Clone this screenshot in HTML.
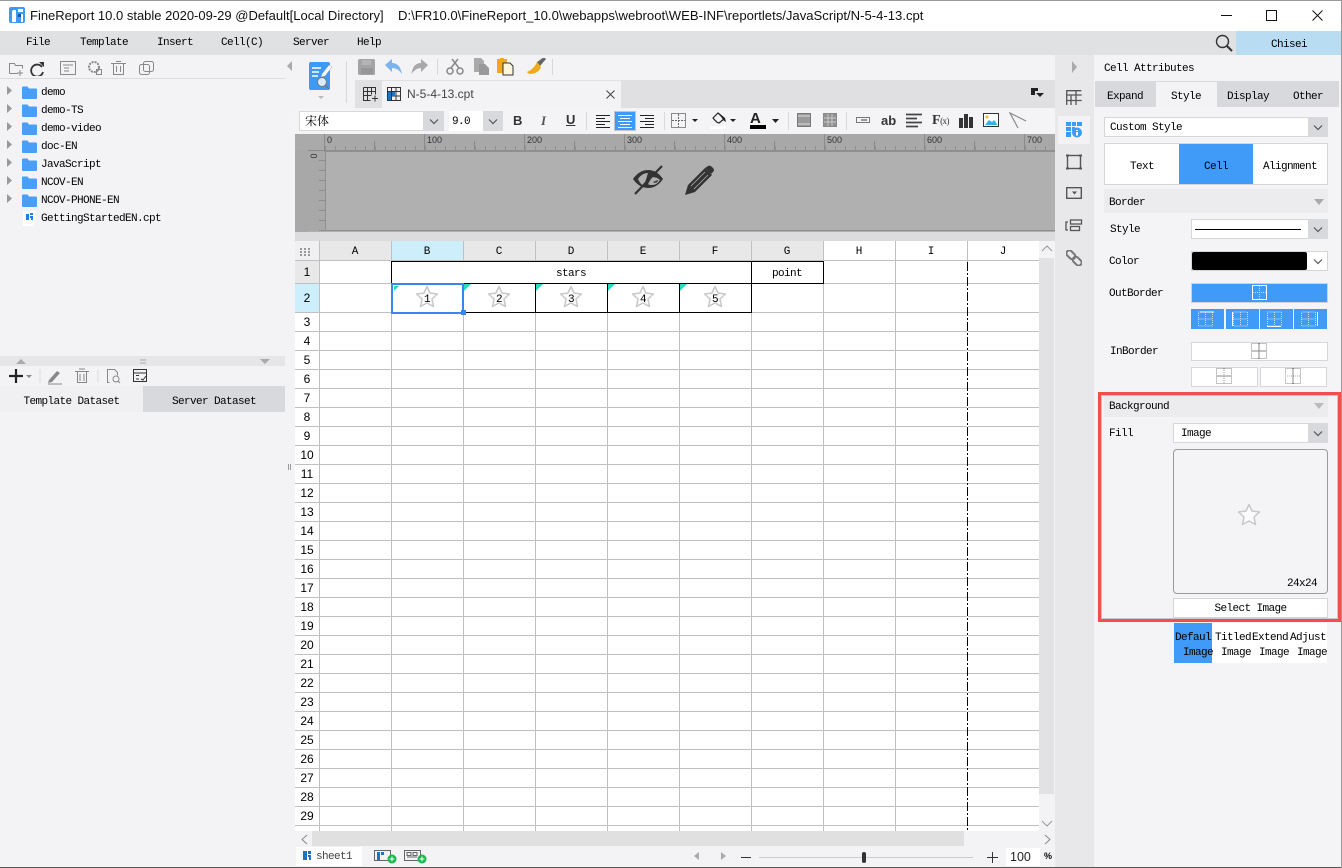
<!DOCTYPE html>
<html><head><meta charset="utf-8"><style>
html,body{margin:0;padding:0}
body{width:1342px;height:868px;position:relative;overflow:hidden;background:#f3f3f6;font-family:"Liberation Mono","Noto Sans CJK SC",monospace;color:#000}
div,span,svg{position:absolute}
.t{white-space:nowrap;font-size:11px;line-height:14px;letter-spacing:-.6px;color:#000;margin-top:1px}
.c{text-align:center}
.s{font-family:"Liberation Sans",sans-serif;letter-spacing:0;margin-top:0}
.b{background:#fff;border:1px solid #d6d6d9;box-sizing:border-box}
.dd{background:#d8d9dc}
.cl{top:245px;font-size:11px;line-height:14px;width:72px;text-align:center}
.rn{left:295px;width:24px;text-align:center;font-family:"Liberation Sans",sans-serif;font-size:12px;line-height:14px}
</style></head><body>
<svg width="0" height="0" style="position:absolute"><defs>
<symbol id="star" viewBox="0 0 24 24"><path d="M12 1.500L15 8l7.500 1-5.500 5 1.500 7.500L12 18l-6.500 3.500L7 14 1.500 9 9 8z" fill="#fbfbfb" stroke="#c8c8c8" stroke-width="1.500" stroke-linejoin="round"/></symbol>
<symbol id="folder" viewBox="0 0 15 14"><path d="M0 1.500Q0 .5 1 .5h4.500L7 2.500h7q1 0 1 1V12q0 1-1 1H1q-1 0-1-1z" fill="#4a9ef5"/></symbol>
<symbol id="chev" viewBox="0 0 20 20"><path d="M6 8.500l4 4 4-4" fill="none" stroke="#555" stroke-width="1.200"/></symbol>
<symbol id="cell" viewBox="0 0 32 20"><g fill="none" stroke="#fff" stroke-dasharray="1 1" opacity=".7"><rect x="7" y="3" width="14" height="14"/><path d="M14 3v14M7 10h14"/></g></symbol>
</defs></svg>

<!-- title bar -->
<div style="left:0;top:0;width:1342px;height:31px;background:#fff"></div>
<svg style="left:9px;top:7px" width="16" height="16" viewBox="0 0 16 16"><rect width="16" height="16" rx="2" fill="#3c9af0"/><path d="M3 15V5q0-2 2-2h2v12zM9 2h5v3H9zM9 7h5v8h-2v-5H9z" fill="#fff"/><path d="M9 7h3v3H9z" fill="#0f5aa8"/></svg>
<div class="t s" style="left:30px;top:8px;font-size:13px;line-height:16px;color:#111">FineReport 10.0 stable 2020-09-29 @Default[Local Directory]</div>
<div class="t s" style="left:398px;top:8px;font-size:13.100px;line-height:16px;color:#111">D:\FR10.0\FineReport_10.0\webapps\webroot\WEB-INF\reportlets/JavaScript/N-5-4-13.cpt</div>
<div style="left:1221px;top:15px;width:11px;height:1px;background:#111"></div>
<div style="left:1266px;top:10px;width:9px;height:9px;border:1px solid #111"></div>
<svg style="left:1312px;top:10px" width="11" height="11"><path d="M.5.5l10 10M10.500.5l-10 10" stroke="#111" fill="none"/></svg>

<!-- menu -->
<div style="left:0;top:31px;width:1342px;height:24px;background:#e0e1e3"></div>
<div class="t" style="left:26px;top:35px">File</div>
<div class="t" style="left:80px;top:35px">Template</div>
<div class="t" style="left:157px;top:35px">Insert</div>
<div class="t" style="left:221px;top:35px">Cell(C)</div>
<div class="t" style="left:293px;top:35px">Server</div>
<div class="t" style="left:357px;top:35px">Help</div>
<svg style="left:1215px;top:34px" width="18" height="18"><circle cx="7.500" cy="7.500" r="6" fill="none" stroke="#333" stroke-width="1.400"/><path d="M12 12l5 5" stroke="#333" stroke-width="2"/></svg>
<div style="left:1236px;top:31px;width:106px;height:24px;background:#b8dcf2"></div>
<div class="t c" style="left:1236px;top:37px;width:106px">Chisei</div>

<!-- left panel -->
<div style="left:0;top:78px;width:285px;height:1px;background:#dcdcde"></div>
<svg style="left:8px;top:60px" width="150" height="16" fill="none" stroke="#888"><path d="M1.500 13.500v-10h5l1 2h7v3M1.500 13.500h8M12 10v6M9 13h6"/><path d="M34 7a6 6 0 1 0 1 5" stroke="#333" stroke-width="1.800"/><path d="M31 2h5v5z" fill="#333" stroke="none"/><rect x="52.500" y="1.500" width="15" height="13"/><path d="M55 5h10M56 8h5M56 11h5"/><circle cx="86" cy="7" r="5" stroke-dasharray="2 1" stroke-width="2"/><rect x="88.500" y="9.500" width="5" height="5"/><rect x="105.500" y="3.500" width="10" height="11"/><path d="M103 3.500h15M108 1.500h5M108.500 6v6M112.500 6v6"/><rect x="131.500" y="4.500" width="10" height="10" rx="2"/><rect x="135.500" y="1.500" width="10" height="10" rx="2"/></svg>

<svg style="left:7px;top:86px" width="6" height="124" fill="#999"><path d="M0 0l5 4.500-5 4.500zM0 18l5 4.500-5 4.500zM0 36l5 4.500-5 4.500zM0 54l5 4.500-5 4.500zM0 72l5 4.500-5 4.500zM0 90l5 4.500-5 4.500zM0 108l5 4.500-5 4.500z"/></svg>
<svg style="left:22px;top:86px" width="15" height="14"><use href="#folder"/></svg>
<svg style="left:22px;top:104px" width="15" height="14"><use href="#folder"/></svg>
<svg style="left:22px;top:122px" width="15" height="14"><use href="#folder"/></svg>
<svg style="left:22px;top:140px" width="15" height="14"><use href="#folder"/></svg>
<svg style="left:22px;top:158px" width="15" height="14"><use href="#folder"/></svg>
<svg style="left:22px;top:176px" width="15" height="14"><use href="#folder"/></svg>
<svg style="left:22px;top:194px" width="15" height="14"><use href="#folder"/></svg>
<svg style="left:23px;top:211px" width="13" height="15"><path d="M0 0h12v11l-3 4H0z" fill="#fff"/><path d="M3 3h3v6H3zM7 2h3v2H7zM7 5h3v4H8V7H7z" fill="#1f7fe0"/></svg>
<div class="t" style="left:41px;top:85px">demo</div>
<div class="t" style="left:41px;top:103px">demo-TS</div>
<div class="t" style="left:41px;top:121px">demo-video</div>
<div class="t" style="left:41px;top:139px">doc-EN</div>
<div class="t" style="left:41px;top:157px">JavaScript</div>
<div class="t" style="left:41px;top:175px">NCOV-EN</div>
<div class="t" style="left:41px;top:193px">NCOV-PHONE-EN</div>
<div class="t" style="left:41px;top:211px">GettingStartedEN.cpt</div>

<div style="left:0;top:356px;width:285px;height:10px;background:#e6e6e8"></div>
<svg style="left:16px;top:358px" width="260" height="7"><path d="M0 6l5-5 5 5zM244 1h10l-5 5z" fill="#aaa"/><path d="M124 2h6M124 5h6" stroke="#aaa"/></svg>
<svg style="left:8px;top:367px" width="142" height="18"><path d="M8 2v14M1 9h14" stroke="#222" stroke-width="2.200"/><path d="M18 8h6l-3 3z" fill="#888"/><path d="M32 2v14M90 2v14" stroke="#ddd"/><path d="M41 13l8-9 3 2-8 9-4 1z" fill="#888"/><path d="M40 17h14" stroke="#888"/><g fill="none" stroke="#888"><rect x="69.500" y="4.500" width="9" height="11"/><path d="M67 4.500h14M71 2h6M72 7v7M76 7v7"/><path d="M101.500 15.500h-2v-13h7l3 3v3"/><circle cx="108" cy="12" r="3"/><path d="M110 14l2 2"/></g><g fill="none" stroke="#333"><rect x="125.500" y="2.500" width="13" height="12"/><path d="M125 6h14M128 8.500h3M128 12h3M133 12l2 1 3-4"/></g></svg>
<div style="left:0;top:386px;width:143px;height:26px;background:#f0f0f3"></div>
<div style="left:143px;top:386px;width:142px;height:26px;background:#d8d9dc"></div>
<div class="t c" style="left:0;top:394px;width:143px">Template Dataset</div>
<div class="t c" style="left:143px;top:394px;width:142px">Server Dataset</div>
<div style="left:288px;top:464px;width:1px;height:6px;background:#999"></div>
<div style="left:290px;top:464px;width:1px;height:6px;background:#999"></div>

<!-- top toolbar -->
<svg style="left:287px;top:61px" width="6" height="10"><path d="M5 0v10L0 5z" fill="#aaa"/></svg>
<svg style="left:309px;top:61px" width="24" height="41"><rect y="1" width="21" height="28" rx="2" fill="#3d9bf7"/><path d="M3 7h9M3 11h7M3 15h6" stroke="#fff" stroke-width="1.500"/><path d="M13 13l7-9 3 2-7 9-4 1z" fill="#fff" stroke="#999" stroke-width=".5"/><circle cx="13" cy="21" r="4.500" fill="#dbeafc" stroke="#777"/><path d="M16 24l4 4" stroke="#777" stroke-width="1.500"/><path d="M9 35h6l-3 3z" fill="#bbb"/></svg>
<div style="left:346px;top:61px;width:1px;height:42px;background:#d8d8da"></div>
<div style="left:437px;top:59px;width:1px;height:16px;background:#d8d8da"></div>
<div style="left:552px;top:59px;width:1px;height:16px;background:#d8d8da"></div>
<svg style="left:357px;top:58px" width="190" height="18"><path d="M1 3q0-2 2-2h14l1 1v14q0 1-1 1H3q-2 0-2-2z" fill="#a4a4a4"/><rect x="5" y="2" width="9" height="5" fill="#b4b4b4"/><rect x="4" y="10" width="12" height="6" fill="#969696"/><path d="M28 7l7-6v4q8 0 10 11-4-6-10-6v4z" fill="#7ab3ee"/><path d="M71 7l-7-6v4q-8 0-9.500 11 4-6 9.500-6v4z" fill="#a8a8a8"/><g fill="none" stroke="#888" stroke-width="1.500"><circle cx="93" cy="13" r="3"/><circle cx="103" cy="13" r="3"/><path d="M94 10l7-9M102 10l-7-9"/></g><path d="M117 0h7l3 3v3h-5v8h-5z" fill="#aaa"/><path d="M122 6h6l4 4v7h-10z" fill="#999"/><rect x="140" y="1" width="10" height="14" fill="#f2a81d"/><path d="M146 5h7l3 3v9h-10z" fill="#fdf6dd" stroke="#333"/><rect x="143" y="0" width="4" height="2" fill="#f2a81d"/><path d="M180 4l7-5 2 2-6 7z" fill="#666"/><path d="M180 4l4 5q-2 6-10 7-3 0-4-2 7-3 10-10z" fill="#f0a91f"/></svg>

<!-- tab bar -->
<div style="left:355px;top:80px;width:700px;height:28px;background:#e0e0e2"></div>
<div style="left:382px;top:81px;width:239px;height:27px;background:#f3f3f6"></div>
<svg style="left:363px;top:87px" width="16" height="15" fill="none" stroke="#333"><path d="M.5 .5h12v7M.5 .5v13h7M4.500 .5v13M8.500 .5v7M.5 4.500h12M.5 8.500h8"/><path d="M12 8.500v6M9 11.500h6"/></svg>
<svg style="left:387px;top:87px" width="14" height="14"><path d="M.5 .5h13v13H.5zM4.500 .5v13M9 .5v13M.5 4.500h13M.5 9h13" fill="none" stroke="#333"/><rect x="1" y="5" width="3" height="8" fill="#1a75c9"/><rect x="5" y="5" width="3" height="4" fill="#1a75c9"/></svg>
<div class="t s" style="left:407px;top:87px;font-size:12px;line-height:15px;color:#444">N-5-4-13.cpt</div>
<svg style="left:606px;top:90px" width="9" height="9"><path d="M.5 .5l8 8M8.500 .5l-8 8" stroke="#444"/></svg>
<svg style="left:1031px;top:88px" width="14" height="11"><path d="M0 0h7v3H4v4H0z" fill="#222"/><path d="M5 5h8l-4 4z" fill="#222"/></svg>

<!-- format toolbar -->
<div style="left:295px;top:108px;width:760px;height:26px;background:#f4f4f7"></div>
<div style="left:299px;top:111px;width:125px;height:20px;background:#fff;border:1px solid #d8d8d8;box-sizing:border-box"></div>
<div class="dd" style="left:424px;top:111px;width:20px;height:20px"></div>
<svg style="left:424px;top:111px" width="20" height="20"><use href="#chev"/></svg>
<div class="t" style="left:305px;top:113px;margin-top:0;font-family:'Noto Serif CJK SC','Noto Sans CJK SC',serif;font-size:12px;letter-spacing:0;line-height:16px">宋体</div>
<div style="left:449px;top:111px;width:34px;height:20px;background:#fff"></div>
<div class="dd" style="left:483px;top:111px;width:20px;height:20px"></div>
<svg style="left:483px;top:111px" width="20" height="20"><use href="#chev"/></svg>
<div class="t" style="left:452px;top:114px">9.0</div>
<div class="t s" style="left:513px;top:113px;font-weight:700;font-size:13px;line-height:16px;color:#333">B</div>
<div class="t s" style="left:541px;top:113px;font-style:italic;font-weight:700;font-size:13px;line-height:16px;color:#555;font-family:'Liberation Serif',serif">I</div>
<div class="t s" style="left:566px;top:112px;font-weight:700;font-size:13px;line-height:15px;color:#333;text-decoration:underline">U</div>
<div style="left:586px;top:112px;width:1px;height:18px;background:#d8d8da"></div>
<div style="left:614px;top:111px;width:22px;height:20px;background:#409bf8;box-sizing:border-box;border:1px solid #c5c5c8"></div>
<svg style="left:596px;top:115px" width="60" height="13"><path d="M0 .5h14M0 3.500h9M0 6.500h14M0 9.500h9M0 12.500h14M44 .5h14M49 3.500h9M44 6.500h14M49 9.500h9M44 12.500h14" stroke="#222"/><path d="M22 .5h14M24 3.500h10M22 6.500h14M24 9.500h10M22 12.500h14" stroke="#fff"/></svg>
<div style="left:664px;top:112px;width:1px;height:18px;background:#d8d8da"></div>
<svg style="left:671px;top:113px" width="30" height="15"><rect x=".5" y=".5" width="14" height="14" fill="none" stroke="#222" stroke-dasharray="1 1"/><path d="M7.500 1v13M1 7.500h13" stroke="#666" stroke-dasharray="2 1"/><path d="M21 6h6l-3 3z" fill="#222"/></svg>
<svg style="left:710px;top:112px" width="32" height="17"><path d="M3 6l5-5 6 6-5 4q-2 0-6-5z" fill="#f4f4f7" stroke="#222" stroke-width="1.200"/><path d="M6 3l3-3M9 1l6 5 1 4-3-2z" fill="#222"/><rect y="14" width="16" height="3" fill="#fff"/><path d="M20 7h6l-3 3z" fill="#222"/></svg>
<div class="t s" style="left:750px;top:110px;font-weight:700;font-size:15px;line-height:17px;color:#222">A</div>
<div style="left:750px;top:125px;width:16px;height:4px;background:#000"></div>
<svg style="left:772px;top:119px" width="7" height="4"><path d="M0 0h7L3.500 4z" fill="#222"/></svg>
<div style="left:788px;top:112px;width:1px;height:18px;background:#d8d8da"></div>
<div style="left:846px;top:112px;width:1px;height:18px;background:#d8d8da"></div>
<svg style="left:797px;top:113px" width="40" height="15"><rect x=".5" y=".5" width="13" height="13" fill="#9a9a9a" stroke="#777"/><path d="M1 3h12M1 11h12" stroke="#ddd"/><rect x="26.500" y=".5" width="13" height="13" fill="#8f8f8f" stroke="#888"/><path d="M27 5h12M27 9h12M31 1v12M35 1v12" stroke="#ccc"/></svg>
<svg style="left:855px;top:112px" width="175" height="17"><g fill="none" stroke="#777"><rect x="1.500" y="5.500" width="13" height="5"/><path d="M6 8h6" stroke-width="1.500"/></g><path d="M51 2.500h16M51 6.500h11M51 10.500h16M51 14.500h12" stroke="#444" stroke-width="1.800"/><rect x="104" y="6" width="4" height="10" fill="#333"/><rect x="109" y="2" width="4" height="14" fill="#333"/><rect x="114" y="5" width="4" height="11" fill="#333"/><rect x="128.500" y="1.500" width="15" height="13" fill="#fff" stroke="#333"/><path d="M130 13l4-5 3 2 2-2 3 4v1z" fill="#33b4ee"/><circle cx="132" cy="5" r="1.500" fill="#f5b53b"/><path d="M171 9L155 1l8 15" fill="none" stroke="#888" stroke-width="1.200"/></svg>
<div class="t s" style="left:881px;top:113px;font-weight:700;font-size:13px;line-height:16px;color:#333">ab</div>
<div class="t" style="left:932px;top:113px;margin-top:0;font-family:'Liberation Serif',serif;font-weight:700;font-size:14px;letter-spacing:-.5px;line-height:16px;color:#333">F<span style="position:static;font-size:9px;font-weight:400">(x)</span></div>

<!-- ruler / header area -->
<div style="left:295px;top:134px;width:760px;height:98px;background:#b0b0b0"></div>
<div style="left:295px;top:134px;width:13px;height:98px;background:#a8a8a8"></div>
<div style="left:295px;top:134px;width:760px;height:16px;background:#a8a8a8"></div>
<div style="left:308px;top:150px;width:17px;height:81px;background:#a8a8a8"></div>
<div style="left:295px;top:134px;width:30px;height:16px;background:#aaa"></div>
<div style="left:325px;top:143px;width:730px;height:7px;background:repeating-linear-gradient(90deg,#8e8e8e 0,#8e8e8e 1px,transparent 1px,transparent 10px) 0 3px no-repeat"></div>
<div style="left:324px;top:134px;width:731px;height:16px;background:repeating-linear-gradient(90deg,#8a8a8a 0,#8a8a8a 1px,transparent 1px,transparent 100px)"></div>
<div style="left:374px;top:141px;width:681px;height:9px;background:repeating-linear-gradient(90deg,#8a8a8a 0,#8a8a8a 1px,transparent 1px,transparent 100px)"></div>
<div style="left:324px;top:150px;width:731px;height:2px;background:#8f8f8f"></div>
<div style="left:325px;top:150px;width:1px;height:81px;background:#8f8f8f"></div>
<div style="left:325px;top:230px;width:730px;height:1px;background:#8f8f8f"></div>
<div style="left:308px;top:150px;width:17px;height:1px;background:#8a8a8a"></div>
<div style="left:319px;top:160px;width:6px;height:71px;background:repeating-linear-gradient(180deg,#8e8e8e 0,#8e8e8e 1px,transparent 1px,transparent 10px)"></div>
<div class="t s" style="left:327px;top:134px;font-size:9px;line-height:12px;color:#333">0</div>
<div class="t s" style="left:427px;top:134px;font-size:9px;line-height:12px;color:#333">100</div>
<div class="t s" style="left:527px;top:134px;font-size:9px;line-height:12px;color:#333">200</div>
<div class="t s" style="left:627px;top:134px;font-size:9px;line-height:12px;color:#333">300</div>
<div class="t s" style="left:727px;top:134px;font-size:9px;line-height:12px;color:#333">400</div>
<div class="t s" style="left:827px;top:134px;font-size:9px;line-height:12px;color:#333">500</div>
<div class="t s" style="left:927px;top:134px;font-size:9px;line-height:12px;color:#333">600</div>
<div class="t s" style="left:1027px;top:134px;font-size:9px;line-height:12px;color:#333">700</div>
<div class="t s" style="left:311px;top:151px;font-size:9px;line-height:10px;color:#333;transform:rotate(90deg)">0</div>
<svg style="left:632px;top:165px" width="34" height="31"><path d="M1 14q6-9 15-9 9 0 15 9-6 9-15 9Q7 23 1 14z" fill="#333"/><path d="M6 14q4-6 10-6l-4 13q-4-2-6-7z" fill="#b0b0b0"/><path d="M20 12q5 0 8 3-3 5-8 5-3 0-4-1l4-7z" fill="#b0b0b0"/><path d="M21 17a3 3 0 0 0 5-2z" fill="#333"/><path d="M3 29L30 1" stroke="#333" stroke-width="2.200"/></svg>
<svg style="left:684px;top:165px" width="31" height="31"><path d="M1 30l3-10L21 3l7 7L11 27z" fill="#333"/><path d="M7 21L21 7M10 24L24 10" stroke="#b0b0b0" stroke-width=".8"/><path d="M21 3l3-2q2-1 4 1l1 1q2 2 0 4l-2 2z" fill="#333"/></svg>
<div style="left:295px;top:232px;width:760px;height:9px;background:#dcdcde"></div>

<!-- grid -->
<div style="left:295px;top:241px;width:744px;height:590px;background:#fff"></div>
<div style="left:295px;top:241px;width:528px;height:20px;background:#e8e8e8"></div>
<div style="left:295px;top:241px;width:24px;height:20px;background:#f0f0f2"></div>
<div style="left:391px;top:241px;width:72px;height:20px;background:#cdeefb"></div>
<div style="left:295px;top:261px;width:24px;height:22px;background:#e8e8e8"></div>
<div style="left:295px;top:283px;width:24px;height:29px;background:#cdeefb"></div>
<svg style="left:300px;top:248px" width="11" height="9" fill="#999"><path d="M0 0h2v2H0zM4 0h2v2H4zM8 0h2v2H8zM0 3h2v2H0zM4 3h2v2H4zM8 3h2v2H8zM0 6h2v2H0zM4 6h2v2H4zM8 6h2v2H8z"/></svg>
<!-- horizontal lines -->
<div style="left:295px;top:260px;width:744px;height:1px;background:#c0c0c0"></div>
<div style="left:295px;top:283px;width:744px;height:1px;background:#c0c0c0"></div>
<div style="left:295px;top:312px;width:744px;height:520px;background:repeating-linear-gradient(180deg,#c0c0c0 0,#c0c0c0 1px,transparent 1px,transparent 19px)"></div>
<!-- vertical lines -->
<div style="left:319px;top:241px;width:720px;height:590px;background:repeating-linear-gradient(90deg,#c0c0c0 0,#c0c0c0 1px,transparent 1px,transparent 72px)"></div>
<div style="left:967px;top:262px;width:1px;height:569px;background:repeating-linear-gradient(180deg,#000 0,#000 9px,#fff 9px,#fff 11px,#000 11px,#000 13px,#fff 13px,#fff 15px)"></div>
<div class="cl" style="left:319px">A</div><div class="cl" style="left:391px">B</div><div class="cl" style="left:463px">C</div><div class="cl" style="left:535px">D</div><div class="cl" style="left:607px">E</div><div class="cl" style="left:679px">F</div><div class="cl" style="left:751px">G</div><div class="cl" style="left:823px">H</div><div class="cl" style="left:895px">I</div><div class="cl" style="left:967px">J</div>
<div class="rn" style="top:265px">1</div><div class="rn" style="top:291px">2</div><div class="rn" style="top:315px">3</div><div class="rn" style="top:334px">4</div><div class="rn" style="top:353px">5</div><div class="rn" style="top:372px">6</div><div class="rn" style="top:391px">7</div><div class="rn" style="top:410px">8</div><div class="rn" style="top:429px">9</div><div class="rn" style="top:448px">10</div><div class="rn" style="top:467px">11</div><div class="rn" style="top:486px">12</div><div class="rn" style="top:505px">13</div><div class="rn" style="top:524px">14</div><div class="rn" style="top:543px">15</div><div class="rn" style="top:562px">16</div><div class="rn" style="top:581px">17</div><div class="rn" style="top:600px">18</div><div class="rn" style="top:619px">19</div><div class="rn" style="top:638px">20</div><div class="rn" style="top:657px">21</div><div class="rn" style="top:676px">22</div><div class="rn" style="top:695px">23</div><div class="rn" style="top:714px">24</div><div class="rn" style="top:733px">25</div><div class="rn" style="top:752px">26</div><div class="rn" style="top:771px">27</div><div class="rn" style="top:790px">28</div><div class="rn" style="top:809px">29</div>

<!-- cell contents -->
<div style="left:391px;top:261px;width:361px;height:23px;box-sizing:border-box;border:1px solid #000;background:#fff"></div>
<div style="left:751px;top:261px;width:73px;height:23px;box-sizing:border-box;border:1px solid #000;background:#fff"></div>
<div style="left:391px;top:283px;width:361px;height:30px;box-sizing:border-box;border:1px solid #000;background:#fff"></div>
<div style="left:535px;top:283px;width:1px;height:29px;background:#000"></div>
<div style="left:607px;top:283px;width:1px;height:29px;background:#000"></div>
<div style="left:679px;top:283px;width:1px;height:29px;background:#000"></div>
<div style="left:463px;top:283px;width:1px;height:29px;background:#000"></div>
<div class="t c" style="left:391px;top:266px;width:360px">stars</div>
<div class="t c" style="left:751px;top:266px;width:72px">point</div>
<svg style="left:415px;top:285px" width="24" height="24"><use href="#star"/></svg>
<svg style="left:487px;top:285px" width="24" height="24"><use href="#star"/></svg>
<svg style="left:559px;top:285px" width="24" height="24"><use href="#star"/></svg>
<svg style="left:631px;top:285px" width="24" height="24"><use href="#star"/></svg>
<svg style="left:703px;top:285px" width="24" height="24"><use href="#star"/></svg>
<div class="t c" style="left:391px;top:292px;width:72px">1</div>
<div class="t c" style="left:463px;top:292px;width:72px">2</div>
<div class="t c" style="left:535px;top:292px;width:72px">3</div>
<div class="t c" style="left:607px;top:292px;width:72px">4</div>
<div class="t c" style="left:679px;top:292px;width:72px">5</div>
<svg style="left:392px;top:284px" width="300" height="7" fill="#27dcc0"><path d="M2 2h5l-5 5zM72 0h7l-7 7zM144 0h7l-7 7zM216 0h7l-7 7zM288 0h7l-7 7z"/></svg>
<div style="left:391px;top:283px;width:73px;height:31px;box-sizing:border-box;border:2.500px solid #3a86ee"></div>
<div style="left:461px;top:310px;width:5px;height:5px;background:#3a86ee"></div>

<!-- vertical scrollbar -->
<div style="left:1039px;top:241px;width:16px;height:590px;background:#f3f3f6"></div>
<div style="left:1039px;top:258px;width:15px;height:536px;background:#e2e2e4"></div>
<svg style="left:1041px;top:245px" width="12" height="8"><path d="M1 6l5-5 5 5" fill="none" stroke="#999"/></svg>
<svg style="left:1041px;top:820px" width="12" height="8"><path d="M1 1l5 5 5-5" fill="none" stroke="#999"/></svg>

<!-- horizontal scrollbar / footer -->
<div style="left:295px;top:831px;width:760px;height:37px;background:#f3f3f6"></div>
<div style="left:312px;top:831px;width:652px;height:15px;background:#e0e0e0"></div>
<svg style="left:301px;top:834px" width="8" height="11"><path d="M6 1L1 5.500 6 10" fill="none" stroke="#888"/></svg>
<svg style="left:1044px;top:834px" width="8" height="11"><path d="M1 1l5 4.500L1 10" fill="none" stroke="#888"/></svg>
<div style="left:296px;top:847px;width:66px;height:19px;background:#fff"></div>
<svg style="left:303px;top:851px" width="9" height="9"><path d="M0 0h4v9H0zM5 0h3v3H5zM5 4h3v5H6V6H5z" fill="#1a75c9"/></svg>
<div class="t" style="left:316px;top:849px;color:#444">sheet1</div>
<svg style="left:374px;top:849px" width="24" height="15"><rect x=".5" y="1.500" width="16" height="10" fill="none" stroke="#666"/><path d="M3 3h3v8H3zM7 3h3v3H7z" fill="#1a75c9"/><circle cx="18" cy="10" r="4.500" fill="#16b84e"/><path d="M18 7.500v5M15.500 10h5" stroke="#fff"/></svg>
<svg style="left:404px;top:849px" width="24" height="15"><rect x=".5" y="1.500" width="16" height="10" fill="none" stroke="#666"/><path d="M3 3.500h4v3H3zM9 3.500h4v3H9zM3 8h10" fill="none" stroke="#666"/><circle cx="18" cy="10" r="4.500" fill="#16b84e"/><path d="M18 7.500v5M15.500 10h5" stroke="#fff"/></svg>
<svg style="left:694px;top:852px" width="32" height="9" fill="#aaa"><path d="M5 0v8L0 4zM27 0v8l5-4z"/></svg>
<div style="left:741px;top:857px;width:10px;height:1px;background:#333"></div>
<div style="left:759px;top:857px;width:214px;height:1px;background:#ccc"></div>
<div style="left:862px;top:852px;width:4px;height:11px;background:#333;border-radius:2px"></div>
<svg style="left:987px;top:852px" width="11" height="11"><path d="M5.500 0v11M0 5.500h11" stroke="#333"/></svg>
<div style="left:1006px;top:848px;width:34px;height:18px;background:#fff"></div>
<div class="t s" style="left:1010px;top:850px;font-size:12.500px;line-height:15px;color:#222">100</div>
<div class="t s" style="left:1044px;top:850px;font-size:9px;font-weight:700;line-height:12px">%</div>

<!-- side icon strip -->
<div style="left:1055px;top:55px;width:39px;height:813px;background:#e8e8ea"></div>
<div style="left:1058px;top:116px;width:32px;height:28px;background:#f3f3f6"></div>
<svg style="left:1072px;top:61px" width="6" height="12"><path d="M0 0l5 6-5 6z" fill="#aaa"/></svg>
<svg style="left:1066px;top:90px" width="16" height="16" fill="none" stroke="#555" stroke-width="1.300"><path d="M.7 15V.7h14.600M.7 5h15M.7 10.500h15M5 5v10M10 .7V15"/></svg>
<svg style="left:1066px;top:122px" width="16" height="16" fill="#3d9bf7"><path d="M0 0h5v4H0zM6 0h4v4H6zM11 0h5v4h-5zM0 5h5v4H0zM0 10h5v5H0zM6 5h3v4H6z"/><circle cx="11" cy="10.500" r="5"/><path d="M10 8h2v1h-2zM10 10h2v3.500h-2z" fill="#fff"/></svg>
<svg style="left:1066px;top:154px" width="16" height="16" fill="none" stroke="#555"><rect x="1.500" y="1.500" width="13" height="13" stroke-width="1.400"/><path d="M0 1.500h3M13 1.500h3M0 14.500h3M13 14.500h3" stroke-width="2"/></svg>
<svg style="left:1066px;top:187px" width="16" height="13"><rect x=".7" y=".7" width="14.600" height="10.600" fill="none" stroke="#555" stroke-width="1.400"/><path d="M6 4.500h5l-2.500 3z" fill="#555"/></svg>
<svg style="left:1065px;top:219px" width="18" height="14" fill="none" stroke="#555" stroke-width="1.300"><rect x="5.500" y="1" width="11" height="4"/><rect x="5.500" y="7.500" width="9" height="4"/><path d="M3 3H1v8h2"/></svg>
<svg style="left:1066px;top:250px" width="16" height="16" fill="none" stroke="#777" stroke-width="2"><rect x="-1.500" y="5" width="10" height="6" rx="3" transform="rotate(45 8 8)"/><rect x="7.500" y="5" width="10" height="6" rx="3" transform="rotate(45 8 8)"/></svg>

<!-- attribute panel -->
<div style="left:1094px;top:55px;width:248px;height:813px;background:#f4f4f7"></div>
<div class="t" style="left:1104px;top:61px">Cell Attributes</div>
<div style="left:1095px;top:81px;width:244px;height:26px;background:#d8d9dc"></div>
<div style="left:1156px;top:82px;width:61px;height:25px;background:#f3f3f6"></div>
<div class="t" style="left:1107px;top:89px">Expand</div>
<div class="t" style="left:1171px;top:89px">Style</div>
<div class="t" style="left:1227px;top:89px">Display</div>
<div class="t" style="left:1293px;top:89px">Other</div>

<div class="b" style="left:1104px;top:117px;width:224px;height:20px"></div>
<div class="dd" style="left:1308px;top:117px;width:20px;height:20px"></div>
<svg style="left:1308px;top:117px" width="20" height="20"><use href="#chev"/></svg>
<div class="t" style="left:1110px;top:120px">Custom Style</div>

<div class="b" style="left:1104px;top:143px;width:224px;height:42px"></div>
<div style="left:1179px;top:144px;width:74px;height:40px;background:#409bf8"></div>
<div class="t c" style="left:1105px;top:159px;width:74px">Text</div>
<div class="t c" style="left:1179px;top:159px;width:74px">Cell</div>
<div class="t c" style="left:1253px;top:159px;width:74px">Alignment</div>

<div style="left:1104px;top:189px;width:224px;height:24px;background:#ececee"></div>
<div class="t" style="left:1109px;top:195px">Border</div>
<svg style="left:1314px;top:199px" width="10" height="6"><path d="M0 0h10L5 6z" fill="#aaa"/></svg>

<div class="t" style="left:1110px;top:222px">Style</div>
<div class="b" style="left:1191px;top:219px;width:137px;height:20px"></div>
<div style="left:1195px;top:229px;width:106px;height:1px;background:#000"></div>
<div class="dd" style="left:1308px;top:219px;width:20px;height:20px"></div>
<svg style="left:1308px;top:219px" width="20" height="20"><use href="#chev"/></svg>

<div class="t" style="left:1109px;top:254px">Color</div>
<div class="b" style="left:1191px;top:251px;width:137px;height:20px"></div>
<div style="left:1192px;top:252px;width:115px;height:18px;background:#000;border-radius:2px"></div>
<svg style="left:1308px;top:251px" width="20" height="20"><use href="#chev"/></svg>

<div class="t" style="left:1109px;top:286px">OutBorder</div>
<div style="left:1191px;top:283px;width:137px;height:20px;background:#409bf8;box-sizing:border-box;border:1px solid #cfd3d8"></div>
<svg style="left:1252px;top:285px" width="15" height="15" fill="none"><rect x=".5" y=".5" width="14" height="14" stroke="#fff"/><path d="M7.500 1v13M1 7.500h13" stroke="#fff" stroke-dasharray="1 1" opacity=".7"/></svg>
<div style="left:1191px;top:309px;width:33px;height:20px;background:#409bf8"></div>
<div style="left:1226px;top:309px;width:33px;height:20px;background:#409bf8"></div>
<div style="left:1260px;top:309px;width:33px;height:20px;background:#409bf8"></div>
<div style="left:1294px;top:309px;width:33px;height:20px;background:#409bf8"></div>
<svg style="left:1191px;top:309px" width="33" height="20"><use href="#cell"/><path d="M9 3h14" stroke="#fff"/></svg>
<svg style="left:1226px;top:309px" width="33" height="20"><use href="#cell"/><path d="M6.500 3v14" stroke="#fff"/></svg>
<svg style="left:1260px;top:309px" width="33" height="20"><use href="#cell"/><path d="M7 17.500h14" stroke="#fff"/></svg>
<svg style="left:1294px;top:309px" width="33" height="20"><use href="#cell"/><path d="M23.500 3v14" stroke="#fff"/></svg>

<div class="t" style="left:1110px;top:344px">InBorder</div>
<div class="b" style="left:1191px;top:342px;width:137px;height:19px"></div>
<svg style="left:1251px;top:343px" width="17" height="17" fill="none"><rect x=".5" y=".5" width="15" height="15" stroke="#888" stroke-dasharray="1 1"/><path d="M8 0v16M0 8h16" stroke="#888"/></svg>
<div class="b" style="left:1191px;top:367px;width:67px;height:20px"></div>
<div class="b" style="left:1260px;top:367px;width:67px;height:20px"></div>
<svg style="left:1216px;top:368px" width="17" height="17" fill="none"><rect x=".5" y=".5" width="15" height="15" stroke="#888" stroke-dasharray="1 1"/><path d="M8 0v16" stroke="#aaa" stroke-dasharray="1 1"/><path d="M0 8h16" stroke="#888"/></svg>
<svg style="left:1285px;top:368px" width="17" height="17" fill="none"><rect x=".5" y=".5" width="15" height="15" stroke="#888" stroke-dasharray="1 1"/><path d="M0 8h16" stroke="#aaa" stroke-dasharray="1 1"/><path d="M8 0v16" stroke="#888"/></svg>

<!-- background section -->
<div style="left:1104px;top:395px;width:224px;height:22px;background:#ececee"></div>
<div class="t" style="left:1109px;top:399px">Background</div>
<svg style="left:1314px;top:403px" width="10" height="6"><path d="M0 0h10L5 6z" fill="#bbb"/></svg>
<div class="t" style="left:1109px;top:426px">Fill</div>
<div class="b" style="left:1173px;top:423px;width:155px;height:20px"></div>
<div class="dd" style="left:1308px;top:423px;width:20px;height:20px"></div>
<svg style="left:1308px;top:423px" width="20" height="20"><use href="#chev"/></svg>
<div class="t" style="left:1181px;top:426px">Image</div>
<div style="left:1173px;top:449px;width:155px;height:145px;box-sizing:border-box;border:1px solid #9a9a9a;border-radius:4px;background:#f4f4f7"></div>
<svg style="left:1237px;top:503px" width="24" height="24"><use href="#star"/></svg>
<div class="t" style="left:1287px;top:576px">24x24</div>
<div class="b c" style="left:1173px;top:598px;width:155px;height:20px"></div>
<div class="t c" style="left:1173px;top:601px;width:155px">Select Image</div>

<div style="left:1174px;top:623px;width:38px;height:40px;background:#409bf8"></div>
<div style="left:1212px;top:623px;width:115px;height:40px;background:#fff"></div>
<div class="t" style="left:1175px;top:630px">Defaul</div><div class="t" style="left:1183px;top:645px">Image</div>
<div class="t" style="left:1215px;top:630px">Titled</div><div class="t" style="left:1221px;top:645px">Image</div>
<div class="t" style="left:1252px;top:630px">Extend</div><div class="t" style="left:1259px;top:645px">Image</div>
<div class="t" style="left:1290px;top:630px">Adjust</div><div class="t" style="left:1297px;top:645px">Image</div>

<!-- red highlight -->
<div style="left:1098px;top:392px;width:243px;height:230px;box-sizing:border-box;border:3px solid #f24e4e;box-shadow:inset 0 0 0 1px rgba(120,120,120,.35)"></div>

<!-- window edge -->
<div style="left:0;top:867px;width:1342px;height:1px;background:#555"></div>
<div style="left:1341px;top:0;width:1px;height:868px;background:#9a9a9a"></div>
<div style="left:0;top:0;width:1342px;height:1px;background:#9a9a9a"></div>
</body></html>
